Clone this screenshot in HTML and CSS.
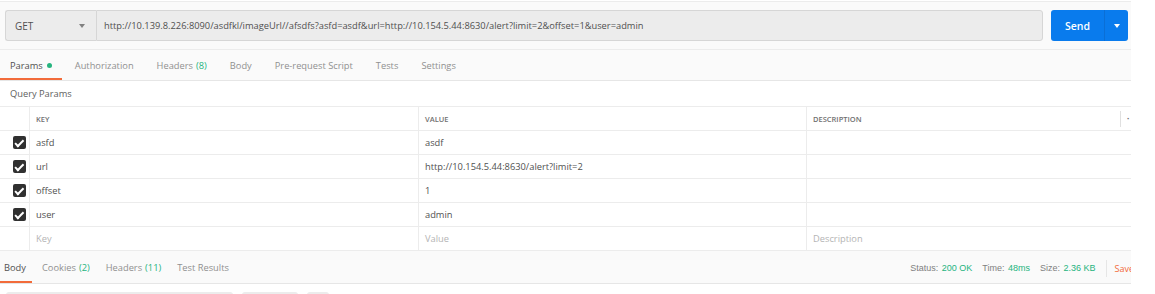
FILE: index.html
```html
<!DOCTYPE html>
<html lang="en">
<head>
  <meta charset="UTF-8" />
  <title>Request</title>
  <link rel="stylesheet" href="styles.css">
</head>
<body>
  <div class="app">

    <div class="url-bar">
      <div class="method">
        <span>GET</span>
        <span class="caret"></span>
      </div>
      <div class="url">http://10.139.8.226:8090/asdfkl/imageUrl//afsdfs?asfd=asdf&amp;url=http://10.154.5.44:8630/alert?limit=2&amp;offset=1&amp;user=admin</div>
      <div class="send">
        <span class="send-label">Send</span>
        <span class="send-more"><span class="caret white"></span></span>
      </div>
    </div>

    <div class="req-tabs">
      <div class="tab active">Params <span class="dot"></span></div>
      <div class="tab">Authorization</div>
      <div class="tab">Headers <span class="count">(8)</span></div>
      <div class="tab">Body</div>
      <div class="tab">Pre-request Script</div>
      <div class="tab">Tests</div>
      <div class="tab">Settings</div>
    </div>

    <div class="params">
      <div class="section-title">Query Params</div>
      <div class="table">
        <div class="row head">
          <div class="cell check"></div>
          <div class="cell">KEY</div>
          <div class="cell">VALUE</div>
          <div class="cell desc">DESCRIPTION <span class="handle"></span><span class="more">•</span></div>
        </div>
        <div class="row">
          <div class="cell check"><span class="box"></span></div>
          <div class="cell">asfd</div>
          <div class="cell">asdf</div>
          <div class="cell desc"></div>
        </div>
        <div class="row">
          <div class="cell check"><span class="box"></span></div>
          <div class="cell">url</div>
          <div class="cell">http://10.154.5.44:8630/alert?limit=2</div>
          <div class="cell desc"></div>
        </div>
        <div class="row">
          <div class="cell check"><span class="box"></span></div>
          <div class="cell">offset</div>
          <div class="cell">1</div>
          <div class="cell desc"></div>
        </div>
        <div class="row">
          <div class="cell check"><span class="box"></span></div>
          <div class="cell">user</div>
          <div class="cell">admin</div>
          <div class="cell desc"></div>
        </div>
        <div class="row placeholder">
          <div class="cell check"></div>
          <div class="cell">Key</div>
          <div class="cell">Value</div>
          <div class="cell desc">Description</div>
        </div>
      </div>
    </div>

    <div class="res-bar">
      <div class="res-tabs">
        <div class="tab active">Body</div>
        <div class="tab">Cookies <span class="count">(2)</span></div>
        <div class="tab">Headers <span class="count">(11)</span></div>
        <div class="tab">Test Results</div>
      </div>
      <div class="res-meta">
        <span class="meta">Status: <b>200 OK</b></span>
        <span class="meta">Time: <b>48ms</b></span>
        <span class="meta">Size: <b>2.36 KB</b></span>
        <span class="save">Save</span>
      </div>
    </div>

    <div class="res-tools">
      <span class="pill wide"></span>
      <span class="pill mid"></span>
      <span class="pill small"></span>
    </div>

  </div>
</body>
</html>
```

FILE: styles.css
```css
body {
  margin: 0;
  background: #ffffff;
  font-family: 'Open Sans', sans-serif;
  font-size: 9.3px;
  color: #505050;
}
.app {
  width: 1131px;
  height: 294px;
  overflow: hidden;
  background: #fafafa;
  border-top: 1px solid #ececec;
  margin-top: 1px;
  box-sizing: border-box;
}

/* url bar */
.url-bar {
  display: flex;
  height: 31px;
  padding: 8px 3px 0 5px;
}
.method {
  width: 91px;
  box-sizing: border-box;
  background: #ececec;
  border: 1px solid #d6d6d6;
  border-right: none;
  border-radius: 3px 0 0 3px;
  display: flex;
  align-items: center;
  justify-content: space-between;
  padding: 0 11px 0 9px;
  font-size: 10px;
  color: #505050;
}
.caret {
  width: 0;
  height: 0;
  border-left: 3px solid transparent;
  border-right: 3px solid transparent;
  border-top: 4px solid #808080;
}
.caret.white {
  border-top-color: #ffffff;
}
.url {
  flex: 1;
  background: #ececec;
  border: 1px solid #d6d6d6;
  border-radius: 0 3px 3px 0;
  display: flex;
  align-items: center;
  padding-left: 7px;
  color: #505050;
  white-space: nowrap;
}
.send {
  width: 77px;
  margin-left: 8px;
  background: #097bed;
  border-radius: 3px;
  display: flex;
  color: #ffffff;
}
.send-label {
  flex: 1;
  display: flex;
  align-items: center;
  justify-content: center;
  font-size: 10.5px;
  font-weight: 600;
}
.send-more {
  width: 23px;
  border-left: 1px solid #0a6fd6;
  display: flex;
  align-items: center;
  justify-content: center;
}

/* request tabs */
.req-tabs {
  display: flex;
  gap: 3px;
  height: 32px;
  margin-top: 8px;
  border-top: 1px solid #ececec;
  border-bottom: 1px solid #e6e6e6;
  box-sizing: border-box;
}
.tab {
  display: flex;
  align-items: center;
  padding: 3px 10px 0;
  color: #909090;
  white-space: nowrap;
  border-bottom: 2px solid transparent;
}
.tab.active {
  color: #505050;
  border-bottom-color: #f26b3a;
}
.count {
  color: #26b47f;
  margin-left: 3px;
}
.dot {
  width: 5px;
  height: 5px;
  border-radius: 50%;
  background: #26b47f;
  margin-left: 4px;
}

/* params table */
.params {
  background: #ffffff;
}
.section-title {
  height: 25px;
  line-height: 26px;
  padding-left: 10px;
  color: #606060;
}
.table {
  border-top: 1px solid #ececec;
}
.row {
  display: grid;
  grid-template-columns: 29px 389px 388px 1fr;
  height: 24px;
  border-bottom: 1px solid #ececec;
  box-sizing: border-box;
}
.cell {
  display: flex;
  align-items: center;
  padding-left: 6px;
  border-left: 1px solid #ececec;
  white-space: nowrap;
  position: relative;
}
.cell.check {
  border-left: none;
  padding-left: 13px;
}
.row.head .cell {
  font-size: 7.5px;
  font-weight: 600;
  color: #707070;
}
.row.placeholder .cell {
  color: #b4b4b4;
}
.box {
  width: 13px;
  height: 13px;
  border-radius: 2px;
  background: #303030;
  position: relative;
}
.box::after {
  content: "";
  position: absolute;
  left: 4px;
  top: 1.5px;
  width: 3px;
  height: 6.5px;
  border-right: 2px solid #ffffff;
  border-bottom: 2px solid #ffffff;
  transform: rotate(45deg);
}
.handle {
  position: absolute;
  left: 313px;
  top: 4px;
  height: 16px;
  border-left: 1px solid #e0e0e0;
}
.more {
  position: absolute;
  left: 320px;
  color: #707070;
  font-size: 6px;
}

/* response bar */
.res-bar {
  display: flex;
  justify-content: space-between;
  height: 33px;
  border-bottom: 1px solid #e6e6e6;
  box-sizing: border-box;
}
.res-tabs {
  display: flex;
  gap: 4px;
}
.res-tabs .tab {
  padding: 3px 6px 0 6px;
}
.res-tabs .tab:first-child {
  padding-left: 4px;
}
.res-meta {
  display: flex;
  align-items: center;
  font-family: 'Liberation Sans', Arial, sans-serif;
  font-size: 9px;
  color: #808080;
  white-space: nowrap;
  margin-right: -3px;
  padding-top: 2px;
}
.meta {
  margin-right: 10px;
}
.meta b {
  font-weight: normal;
  color: #26b47f;
  margin-left: 1px;
}
.save {
  border-left: 1px solid #e6e6e6;
  padding-left: 8px;
  height: 17px;
  line-height: 17px;
  color: #f26b3a;
  font-family: 'Open Sans', sans-serif;
}

.res-tools {
  display: flex;
  gap: 9px;
  padding: 8px 0 0 6px;
  background: #ffffff;
  height: 20px;
}
.pill {
  height: 12px;
  background: #ececec;
  border-radius: 3px;
}
.pill.wide {
  width: 227px;
}
.pill.mid {
  width: 56px;
}
.pill.small {
  width: 22px;
}
```
